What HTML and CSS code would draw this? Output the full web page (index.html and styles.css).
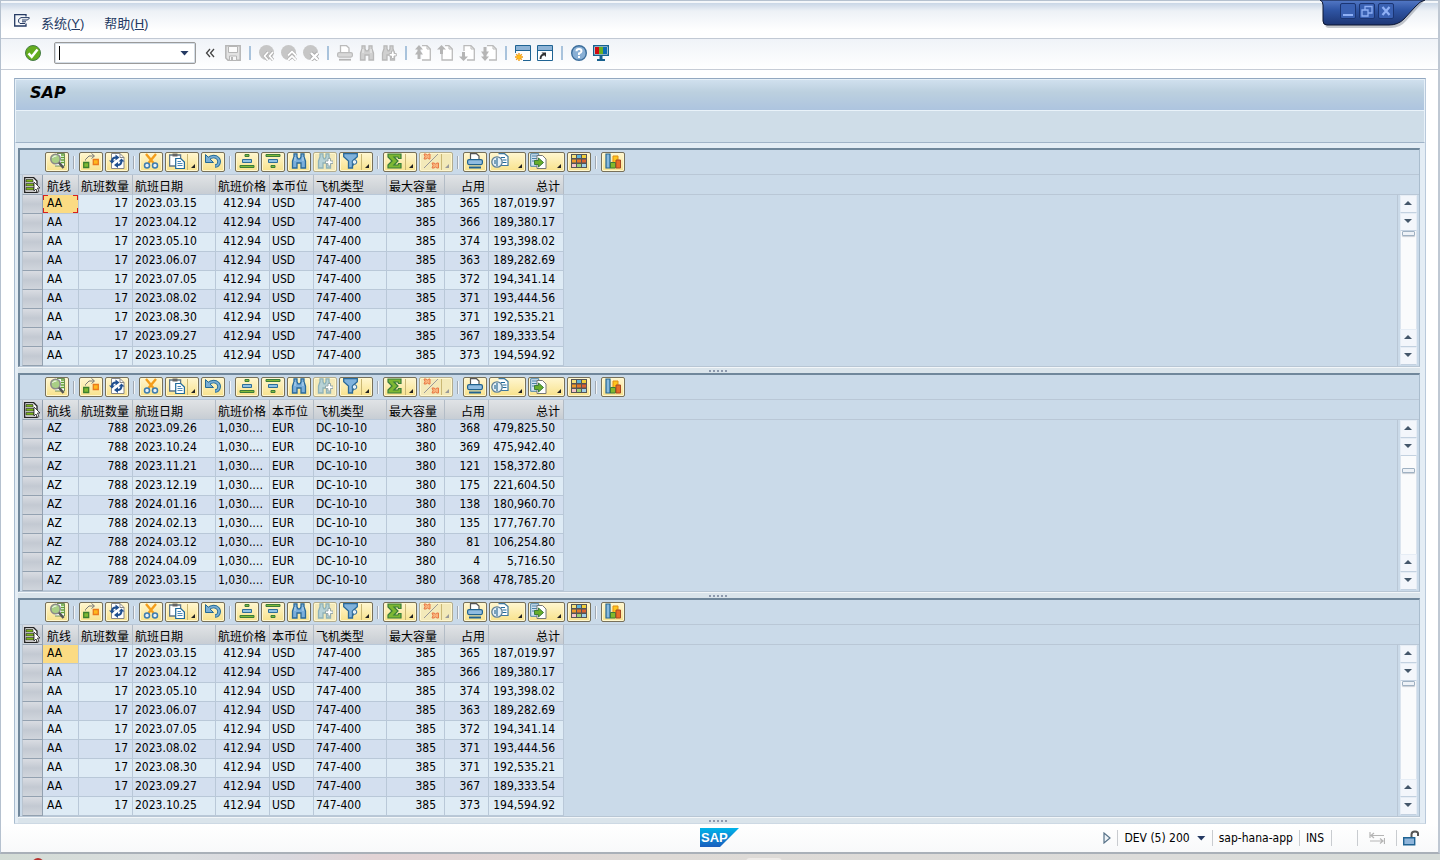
FILE: index.html
```html
<!DOCTYPE html>
<html lang="zh-CN">
<head>
  <meta charset="UTF-8" />
  <meta name="viewport" content="width=device-width, initial-scale=1.0"/>
  <title>SAP</title>
  <link rel="stylesheet" href="styles.css">
</head>
<body>
  <!-- icon sprite -->
  <svg class="sprite" aria-hidden="true">
    <symbol id="i-menu" viewBox="0 0 16 13"><path d="M12 2.500V.700H.7v11.300H12V9.500" fill="none" stroke="#253a63" stroke-width="1.300"/><path d="M15.500 3.600H7L4.600 5.500V8L6 9.500h5M8 6h5.500L15.500 4M8 7.800h4" fill="none" stroke="#253a63"/></symbol>
    <symbol id="i-ok" viewBox="0 0 16 16"><circle cx="8" cy="8" r="7.500" fill="#64ac1e" stroke="#467c46"/><path d="M3.500 8.300l3.200 3.500L12.500 4.500" fill="none" stroke="#fff" stroke-width="2.500"/></symbol>
    <symbol id="i-back" viewBox="0 0 10 10"><path d="M5 1L1.500 5 5 9M9 1L5.500 5 9 9" fill="none" stroke="#444" stroke-width="1.300"/></symbol>
    <symbol id="i-save" viewBox="0 0 16 16"><path d="M.8.800h14.400v14.400H3L.8 13z" fill="#e2e2e2" stroke="#b6b6b6" stroke-width="1.500"/><path d="M3.500 1.500h9v6h-9z" fill="#fbfbfb" stroke="#b6b6b6"/><path d="M4.500 11h7v4.500h-7z" fill="#f7f7f7" stroke="#b6b6b6"/><path d="M6 12h2v3H6z" fill="#b6b6b6"/></symbol>
    <symbol id="i-prev" viewBox="0 0 16 16"><circle cx="7.500" cy="7.500" r="7.500" fill="#c6c6c6"/><path d="M9 7L5.500 11 9 15M14 7l-3.500 4 3.500 4" fill="none" stroke="#aaa" stroke-width="3"/><path d="M9 7L5.500 11 9 15M14 7l-3.500 4 3.500 4" fill="none" stroke="#fff" stroke-width="1.800"/></symbol>
    <symbol id="i-exit" viewBox="0 0 16 16"><circle cx="7.500" cy="7.500" r="7.500" fill="#c6c6c6"/><path d="M7 10.500l4-4 4 4M7 15l4-4 4 4" fill="none" stroke="#aaa" stroke-width="3"/><path d="M7 10.500l4-4 4 4M7 15l4-4 4 4" fill="none" stroke="#fff" stroke-width="1.800"/></symbol>
    <symbol id="i-cancel" viewBox="0 0 16 16"><circle cx="7.500" cy="7.500" r="7.500" fill="#c6c6c6"/><path d="M8 8l7 7M15 8l-7 7" stroke="#aaa" stroke-width="4"/><path d="M8 8l7 7M15 8l-7 7" stroke="#fff" stroke-width="2.400"/></symbol>
    <symbol id="i-print-off" viewBox="0 0 16 16"><path d="M3.500 8V.7h6L12 3v5" fill="#fff" stroke="#bbb" stroke-width="1.300"/><rect x=".6" y="7.600" width="14.800" height="4.500" rx="1.500" fill="#d8d8d8" stroke="#bbb" stroke-width="1.200"/><path d="M2 14.700h12" stroke="#b4b4b4" stroke-width="1.800"/></symbol>
    <symbol id="i-find-off" viewBox="0 0 16 16"><path d="M3 .8h3v3l1 2h2l1-2v-3h3v3L14.500 8v7h-4.500v-5H6v5H1.500V8L3 3.800z" fill="#d0d0d0" stroke="#b8b8b8" stroke-width="1.300"/><path d="M4 4v4M12 4v4" stroke="#f0f0f0"/></symbol>
    <symbol id="i-next-off" viewBox="0 0 16 16"><path d="M3 .8h3v3l1 2h1l1-2v-3h3v3L13.500 8v7h-4v-5H6v5H1.500V8L3 3.800z" fill="#d0d0d0" stroke="#b8b8b8" stroke-width="1.300"/><path d="M10.500 6h2.500v2.500h2.300v2.500H13v2.500h-2.500V11H8.200V8.500h2.300z" fill="#fff" stroke="#b8b8b8"/></symbol>
    <symbol id="i-first" viewBox="0 0 16 16"><path d="M7 .7h5L15.300 4v11H7" fill="#fff" stroke="#bbb" stroke-width="1.300"/><path d="M12 1v3h3" fill="none" stroke="#bbb"/><path d="M4 0l4 4.500H5.500V6L8 9.500H5.500V14h-3V9.500H0L2.500 6V4.500H0z" fill="#b5b5b5"/></symbol>
    <symbol id="i-pgup" viewBox="0 0 16 16"><path d="M8 .7h4L15.300 4v11H5V9" fill="#fff" stroke="#bbb" stroke-width="1.300"/><path d="M12 1v3h3" fill="none" stroke="#bbb"/><path d="M4.500 0L9 4.500H6V9H3V4.500H0z" fill="#b5b5b5"/></symbol>
    <symbol id="i-pgdn" viewBox="0 0 16 16"><path d="M5 6V.7h7L15.300 4v11H8" fill="#fff" stroke="#bbb" stroke-width="1.300"/><path d="M12 1v3h3" fill="none" stroke="#bbb"/><path d="M3 7h3v4.500h3L4.500 16 0 11.500h3z" fill="#b5b5b5"/></symbol>
    <symbol id="i-last" viewBox="0 0 16 16"><path d="M6 .7h6L15.300 4v11H8" fill="#fff" stroke="#bbb" stroke-width="1.300"/><path d="M12 1v3h3" fill="none" stroke="#bbb"/><path d="M2.500 2h3v4.500H8L5.500 10v1.500H8L4 16l-4-4.500h2.500V10L0 6.500h2.500z" fill="#b5b5b5"/></symbol>
    <symbol id="i-session" viewBox="0 0 16 16"><path d="M.5.500h15v15H8M.5.500V8" fill="#fff" stroke="#1f6393"/><path d="M1 1h14v4H1z" fill="#8db3d6"/><path d="M0 5.500h16" stroke="#1f6393"/><path d="M4 8v8M0 12h8M1.200 9.200l5.600 5.600M6.800 9.200l-5.600 5.600" stroke="#f39b12" stroke-width="1.400"/><circle cx="4" cy="12" r="2" fill="#ffbd1a"/></symbol>
    <symbol id="i-shortcut" viewBox="0 0 16 16"><path d="M.5.500h15v15H.5z" fill="#fff" stroke="#1f6393"/><path d="M1 1h14v4H1z" fill="#8db3d6"/><path d="M0 5.500h16" stroke="#1f6393"/><path d="M3.500 14q0-4 3.500-4.500" fill="none" stroke="#333" stroke-width="1.800"/><path d="M4.500 7.500H9V12z" fill="#333"/></symbol>
    <symbol id="i-help" viewBox="0 0 16 16"><circle cx="8" cy="8" r="7.300" fill="#8ab0d5" stroke="#3c6e9c" stroke-width="1.400"/><path d="M5.500 6.300Q5.500 4 8 4t2.500 2.200Q10.500 7.500 8 8.500v1.500M8 11v2" fill="none" stroke="#fff" stroke-width="2"/></symbol>
    <symbol id="i-layout" viewBox="0 0 16 16"><path d="M.7.700h14.600v9.600H.7z" fill="#fff" stroke="#17618f" stroke-width="1.400"/><path d="M2 2h4v7H2z" fill="#d10a10"/><path d="M6 2h4v7H6z" fill="#6ab023"/><path d="M10 2h4v7h-4z" fill="#0e6eb4"/><path d="M6.500 11h3v3h2.500v2H4v-2h2.500z" fill="#17618f"/></symbol>

    <symbol id="g-detail" viewBox="0 0 16 16"><path d="M8 .5h7.500V13H6" fill="#fff" stroke="#6c8d55"/><path d="M12 2h3M12 4.500h3M12 7h3M12 9.500h3" stroke="#5fa22c" stroke-width="1.400"/><circle cx="6.500" cy="6" r="4.700" fill="#a9cf85" stroke="#8a8a8a" stroke-width="1.600"/><path d="M3.500 5q1-2.500 4-2" fill="none" stroke="#fff"/><path d="M10 9.500l4.500 5.500" stroke="#555" stroke-width="2.500"/></symbol>
    <symbol id="g-check" viewBox="0 0 16 16"><path d="M.7 9.500h5v5h-5z" fill="#7fb832" stroke="#3c7f2e" stroke-width="1.300"/><path d="M10.300 6.500h5v5h-5z" fill="#ffb91c" stroke="#ea7a1c" stroke-width="1.300"/><path d="M2.500 7.500V6.500L6 3h5M8.500.5l3 2.500-3 2.500" fill="none" stroke="#777"/></symbol>
    <symbol id="g-refresh" viewBox="0 0 16 16"><path d="M2.500.500H11l4 4v11H2.500z" fill="#fff" stroke="#888"/><path d="M11 .5v4h4" fill="none" stroke="#888"/><path d="M3 8.500q0-4 4-4M12.500 7.500q0 4.500-4 4.500" fill="none" stroke="#1f4f8f" stroke-width="2"/><path d="M6.500 1.500l4 3-4 3zM9 9l-4 3 4 3zM0 7.500h6l-3 3zM9.500 8.500h6l-3-3z" fill="#1f4f8f"/></symbol>
    <symbol id="g-cut" viewBox="0 0 16 16"><path d="M3 1l7.500 9M13 1L5.500 10" stroke="#f49d1a" stroke-width="2.400"/><circle cx="4" cy="12.500" r="2.500" fill="#e9f1f8" stroke="#3c7cae" stroke-width="1.500"/><circle cx="12" cy="12.500" r="2.500" fill="#e9f1f8" stroke="#3c7cae" stroke-width="1.500"/></symbol>
    <symbol id="g-paste" viewBox="0 0 16 16"><path d="M.6 2h11v11H.6z" fill="#fff" stroke="#5f7789" stroke-width="1.300"/><path d="M3.500.5h5v3h-5z" fill="#666"/><path d="M6.700 5.500h5L15.400 9v6.500H6.700z" fill="#fff" stroke="#1f6a9c" stroke-width="1.200"/><path d="M8.500 8.500H12M8.500 10.500h5M8.500 12.500h5" stroke="#4a88b6"/></symbol>
    <symbol id="g-undo" viewBox="0 0 16 16"><path d="M3 6q4-3.500 8-2 4.500 2.500 2.500 7-1 2-3.500 2" fill="none" stroke="#236a96" stroke-width="3.600"/><path d="M.5 1.500v8h8z" fill="#79aed4" stroke="#236a96"/><path d="M3 6q4-3.500 8-2 4.500 2.500 2.500 7-1 2-3 2" fill="none" stroke="#79aed4" stroke-width="1.800"/></symbol>
    <symbol id="g-asc" viewBox="0 0 16 16"><path d="M6 1.500h4v2H6z" fill="#82bb38" stroke="#3b7d3a"/><path d="M3.500 6.500h9v3h-9z" fill="#8ec1e4" stroke="#2c6d99"/><path d="M1 12.500h14v2H1z" fill="#82bb38" stroke="#3b7d3a"/></symbol>
    <symbol id="g-desc" viewBox="0 0 16 16"><path d="M1 1.500h14v2H1z" fill="#82bb38" stroke="#3b7d3a"/><path d="M3.500 6.500h9v3h-9z" fill="#8ec1e4" stroke="#2c6d99"/><path d="M6 12.500h4v2H6z" fill="#82bb38" stroke="#3b7d3a"/></symbol>
    <symbol id="g-find" viewBox="0 0 16 16"><path d="M3 .8h3v3l1 2h2l1-2v-3h3v3L14.500 8v7h-4.500v-5H6v5H1.500V8L3 3.800z" fill="#7aaedb" stroke="#2a6999" stroke-width="1.300"/><path d="M4 4v4M12 4v4" stroke="#b9d8ef"/></symbol>
    <symbol id="g-next" viewBox="0 0 16 16"><path d="M3 .8h3v3l1 2h1l1-2v-3h3v3L13.500 8v7h-4v-5H6v5H1.500V8L3 3.800z" fill="#b7d2d6" stroke="#8fb2b7" stroke-width="1.300"/><path d="M11 5.500h2.500V8H16v2.500h-2.500V13H11v-2.500H8.500V8H11z" fill="#fff" stroke="#9aa"/></symbol>
    <symbol id="g-filter" viewBox="0 0 16 16"><path d="M.7.700h13.600v3L9.500 8v7h-4V8L.7 3.700z" fill="#7fb2dc" stroke="#2a6999" stroke-width="1.300"/><circle cx="11.500" cy="9" r="2.300" fill="#e8f2f9" stroke="#2a6999"/><path d="M9 14l2-3" stroke="#2a6999"/></symbol>
    <symbol id="g-sum" viewBox="0 0 16 16"><path d="M1 1h13v4.500h-2.500L11 4H7l4 4-4 4h4l.5-1.500H14V15H1v-3l4-4-4-4z" fill="#7db733" stroke="#397c3a" stroke-width="1.200"/></symbol>
    <symbol id="g-sub" viewBox="0 0 16 16"><path d="M1 15L15 1" stroke="#999"/><path d="M1 1h2l1.500 1L6 1h1v5H6L4.500 5 3 6H1l1-2.500zM9 10h2l1.500 1 1.500-1h1.500v5H14l-1.500-1-1.500 1H9l1-2.500z" fill="#f8b37c" stroke="#e87945"/></symbol>
    <symbol id="g-print" viewBox="0 0 16 16"><path d="M3.500 8V.7h6L12 3v5" fill="#fff" stroke="#555" stroke-width="1.200"/><rect x=".6" y="6.600" width="14.800" height="5" rx="1.500" fill="#90bce1" stroke="#22638f" stroke-width="1.200"/><path d="M2 14.500h12" stroke="#22638f" stroke-width="2"/></symbol>
    <symbol id="g-view" viewBox="0 0 18 16"><path d="M7.500.700h6L17 3.500v9H8" fill="#fff" stroke="#3f789e" stroke-width="1.200"/><path d="M10 4.500h4M11.500 7h4M11.500 9.500h4" stroke="#1f6a9c"/><circle cx="6" cy="9" r="5.200" fill="#e6f0f7" stroke="#5d7f96" stroke-width="1.300"/><path d="M6 5v8M4 7v4" stroke="#3f789e" stroke-width="1.300"/></symbol>
    <symbol id="g-export" viewBox="0 0 18 16"><path d="M.7.700h8v12.600h-8z" fill="#d2e3f0" stroke="#4a82a9"/><path d="M2 3h5M2 5.500h5M2 8h3" stroke="#4a82a9"/><path d="M7 2.500h5.500L16 6v9.500H7z" fill="#fff" stroke="#777"/><path d="M4.500 7.500h4V5l5 4.500-5 4.500v-2.500h-4z" fill="#67ad2b" stroke="#3b7d3a"/></symbol>
    <symbol id="g-grid" viewBox="0 0 16 14"><path d="M0 0h16v14H0z" fill="#555"/><path d="M1 1h4v3H1z" fill="#f5e27a"/><path d="M6 1h4v3H6z" fill="#5fb2d8"/><path d="M11 1h4v3h-4z" fill="#f0cf39"/><path d="M1 5.500h4v3H1z" fill="#f29b2a"/><path d="M6 5.500h4v3H6z" fill="#e4762b"/><path d="M11 5.500h4v3h-4z" fill="#dc6132"/><path d="M1 10h4v3H1z" fill="#f4c4c8"/><path d="M6 10h4v3H6z" fill="#9ed173"/><path d="M11 10h4v3h-4z" fill="#a0cde8"/></symbol>
    <symbol id="g-chart" viewBox="0 0 16 16"><path d="M1 1h4v14H1z" fill="#86b8dd" stroke="#24658f" stroke-width="1.200"/><path d="M8 3h5v7H8z" fill="#ffc51d" stroke="#df8d10"/><path d="M5.500 9.500h5V15h-5z" fill="#82b82d" stroke="#3b7d3a"/><path d="M11 7h4.500v8H11z" fill="#e66b28" stroke="#a94820"/></symbol>
    <symbol id="g-select" viewBox="0 0 16 16"><path d="M.7.700h9L13 4v11.300H.7z" fill="#fff" stroke="#222" stroke-width="1.300"/><path d="M2 2.500h7V5H2zM2 6.500h8V9H2zM2 10.500h8V13H2z" fill="#7cb518" stroke="#333" stroke-width=".7"/><path d="M10 5v9l2-2 1.500 3.500 1.500-1L13.500 11H16z" fill="#fff" stroke="#222" stroke-width=".8"/></symbol>
    <symbol id="s-swap" viewBox="0 0 16 12"><path d="M1 0v6M2 3.500h13M5 1L2 3.500 5 6M15.500 6v6M1 9h13M11 6.500L14 9l-3 2.500" fill="none" stroke="#b5b5b5" stroke-width="1.200"/></symbol>
    <symbol id="s-lock" viewBox="0 0 16 16"><path d="M8.500 7V4.500Q8.500 1.500 12 1.500t3 3V6" fill="none" stroke="#555" stroke-width="2"/><path d="M.7 7.700h11v7H.7z" fill="#8fb5da" stroke="#1f6393" stroke-width="1.400"/></symbol>
  </svg>

  <div class="window">
    <nav class="menubar">
      <button class="menu-icon" aria-label="菜单"><svg width="16" height="13"><use href="#i-menu"/></svg></button>
      <a href="#">系统(<u>Y</u>)</a>
      <a href="#">帮助(<u>H</u>)</a>
    </nav>

    <div class="controls">
      <svg class="controls-shape" width="106" height="32" viewBox="0 0 106 32">
        <defs>
          <linearGradient id="tab" x1="0" y1="0" x2="0" y2="1"><stop offset="0" stop-color="#5479c6"/><stop offset=".4" stop-color="#2f55a4"/><stop offset="1" stop-color="#1d3674"/></linearGradient>
        </defs>
        <path d="M2 1Q5 3 5 8v16q0 4 4 4h62q9 0 15-7L104 1z" fill="#8a8f99" opacity=".5"/>
        <path d="M0 0q3 1 3 5v16q0 4 4 4h62q9 0 15-6L95 7q5-6 10-7z" fill="url(#tab)" stroke="#0c1633"/>
      </svg>
      <div class="controls-buttons">
        <button aria-label="最小化"><svg width="14" height="14" viewBox="0 0 14 14"><path d="M2 11h10" stroke="#8fb0f5" stroke-width="2"/></svg></button>
        <button aria-label="还原"><svg width="14" height="14" viewBox="0 0 14 14"><path d="M2 6h6v6H2zM5 6V2.500h7V9H8" fill="none" stroke="#8fb0f5" stroke-width="1.300"/></svg></button>
        <button aria-label="关闭"><svg width="14" height="14" viewBox="0 0 14 14"><path d="M3.500 3l7 8M10.500 3l-7 8" stroke="#8fb0f5" stroke-width="2.200"/></svg></button>
      </div>
    </div>

    <div class="toolbar">
      <button class="enter" aria-label="确认"><svg><use href="#i-ok"/></svg></button>
      <div class="command">
        <input type="text" aria-label="命令">
        <span class="cursor"></span>
        <button aria-label="历史"><span class="caret"></span></button>
      </div>
      <button class="collapse" aria-label="收起"><svg><use href="#i-back"/></svg></button>
      <button aria-label="保存"><svg><use href="#i-save"/></svg></button>
      <i></i>
      <button aria-label="返回"><svg><use href="#i-prev"/></svg></button>
      <button aria-label="退出"><svg><use href="#i-exit"/></svg></button>
      <button aria-label="取消"><svg><use href="#i-cancel"/></svg></button>
      <i></i>
      <button aria-label="打印"><svg><use href="#i-print-off"/></svg></button>
      <button aria-label="查找"><svg><use href="#i-find-off"/></svg></button>
      <button aria-label="查找下一个"><svg><use href="#i-next-off"/></svg></button>
      <i></i>
      <button aria-label="首页"><svg><use href="#i-first"/></svg></button>
      <button aria-label="上一页"><svg><use href="#i-pgup"/></svg></button>
      <button aria-label="下一页"><svg><use href="#i-pgdn"/></svg></button>
      <button aria-label="末页"><svg><use href="#i-last"/></svg></button>
      <i></i>
      <button aria-label="新建会话"><svg><use href="#i-session"/></svg></button>
      <button aria-label="快捷方式"><svg><use href="#i-shortcut"/></svg></button>
      <i></i>
      <button aria-label="帮助"><svg><use href="#i-help"/></svg></button>
      <button aria-label="布局"><svg><use href="#i-layout"/></svg></button>
    </div>

    <main class="screen">
      <h1>SAP</h1>
      <div class="app-toolbar"></div>
      <div class="grids" id="grids"></div>
    </main>

    <footer class="status">
      <svg class="logo" width="40" height="20" viewBox="0 0 40 20">
        <defs><linearGradient id="sap" x1="0" y1="0" x2="0" y2="1"><stop offset="0" stop-color="#00b4ea"/><stop offset="1" stop-color="#1a5dbd"/></linearGradient></defs>
        <path d="M0 0h39L20 19H0z" fill="url(#sap)"/>
        <text x="1" y="14" class="logo-text">SAP</text>
      </svg>
      <div class="status-fields">
        <button class="expand" aria-label="展开"><svg width="8" height="12" viewBox="0 0 8 12"><path d="M1 1v10l6-5z" fill="#eef3f7" stroke="#587389" stroke-width="1.200"/></svg></button>
        <button class="system">DEV (5) 200 <span class="caret"></span></button>
        <span class="field">sap-hana-app</span>
        <span class="field mode">INS</span>
        <span class="field blank"></span>
        <span class="field swap"><svg width="16" height="12"><use href="#s-swap"/></svg></span>
        <span class="field"><svg width="16" height="16"><use href="#s-lock"/></svg></span>
      </div>
    </footer>
  </div>
  <div class="taskbar"><span class="dot"></span><span class="pill"></span></div>

  <script src="script.js"></script>
</body>
</html>
```
FILE: styles.css
```css
* {
  box-sizing: border-box;
}

body {
  margin: 0;
  min-height: 100vh;
  display: flex;
  flex-direction: column;
  overflow-x: hidden;
  font-family: "DejaVu Sans Condensed", "Noto Sans CJK SC", sans-serif;
  font-size: 12px;
  color: #000;
  background: #fff;
}

button {
  margin: 0;
  padding: 0;
  border: none;
  background: none;
  font: inherit;
  color: inherit;
}

svg {
  display: block;
}

.sprite {
  position: absolute;
  width: 0;
  height: 0;
}

.window {
  position: relative;
  flex: 1;
  display: flex;
  flex-direction: column;
  border: 1px solid #b5c1cf;
  border-right: 2px solid #bfc8d3;
  border-bottom: 2px solid #a9b0b8;
  background: #fff;
}

.menubar {
  display: flex;
  align-items: center;
  height: 38px;
  padding: 6px 0 0 13px;
  border-top: 2px solid #f4f7fa;
  border-bottom: 1px solid #c2c9d4;
  background: linear-gradient(#c9d6e6, #edf1f6 8px, #fff 28px);
}

.menu-icon {
  margin-right: 11px;
  padding-bottom: 6px;
}

.menubar a {
  margin-right: 20px;
  font-family: "Liberation Sans", "Noto Sans CJK SC", sans-serif;
  font-size: 13px;
  line-height: 20px;
  color: #253a63;
  text-decoration: none;
}

/* window buttons */
.controls {
  position: absolute;
  top: -1px;
  right: 12px;
  width: 106px;
}

.controls-buttons {
  position: absolute;
  top: 3px;
  left: 20px;
  display: flex;
  gap: 3px;
}

.controls-buttons button {
  width: 16px;
  height: 16px;
  border: 1px solid #1b3573;
  border-radius: 2px;
  background: #3a61b3;
}

/* standard toolbar */
.toolbar {
  display: flex;
  align-items: center;
  gap: 6px;
  height: 31px;
  padding: 0 0 2px 24px;
  border-bottom: 1px solid #c6ccd6;
  background: linear-gradient(#f0f3f8, #fff);
}

.toolbar svg {
  width: 16px;
  height: 16px;
}

.toolbar i {
  width: 6px;
  height: 14px;
  background: linear-gradient(#a9c3dc, #a9c3dc) center / 2px 100% no-repeat;
}

.toolbar .enter {
  margin-right: 7px;
}

.toolbar .collapse {
  width: 17px;
  padding-left: 3px;
}

.toolbar .collapse svg {
  width: 10px;
  height: 10px;
}

.command {
  position: relative;
  display: flex;
  width: 142px;
  height: 22px;
  border: 1px solid #9a9a9a;
  border-radius: 2px;
  box-shadow: inset 0 0 0 1px #d4dde6;
  background: #fff;
}

.command input {
  flex: 1;
  min-width: 0;
  padding: 0 4px;
  border: none;
  outline: none;
  background: none;
  font: inherit;
}

.command .cursor {
  position: absolute;
  left: 4px;
  top: 3px;
  width: 1px;
  height: 14px;
  background: #000;
}

.command button {
  width: 20px;
  padding-left: 5px;
}

.caret {
  display: block;
  width: 9px;
  height: 5px;
  background: #253a63;
  clip-path: polygon(0 0, 100% 0, 50% 100%);
}

/* main screen */
.screen {
  margin: 8px 12px 0 13px;
  border: 1px solid;
  border-color: #93a8c0 #b9c9db #cdd9e4 #a9bccf;
  background: #e4edf5;
}

.screen h1 {
  margin: 0;
  height: 31px;
  padding-left: 14px;
  border: 1px solid #e6f0f8;
  border-bottom: none;
  font-family: "DejaVu Sans", sans-serif;
  font-size: 16px;
  font-style: italic;
  line-height: 25px;
  background: linear-gradient(#d0e0ee, #bcd0df 40%, #adc4df);
}

.app-toolbar {
  height: 33px;
  border: 1px solid #e9f2f9;
  border-bottom: 1px solid #a0b3c7;
  background: #cfdde8;
}

.grids {
  display: flex;
  flex-direction: column;
  padding: 5px 5px 0 3px;
}

/* ALV grid */
.alv {
  border: 2px solid #70879b;
  border-right: 1px solid #a9bccd;
  border-bottom: 1px solid #b8c6d4;
  background: #cadae9;
}

.splitter {
  display: flex;
  justify-content: center;
  gap: 2px;
  height: 6px;
  padding: 2px 2px 0 0;
  border-top: 1px solid #f2f6f9;
  background: #dae4eb;
}

.splitter span {
  width: 2px;
  height: 2px;
  background: #8d99ad;
}

.alv-toolbar {
  display: flex;
  align-items: center;
  gap: 2px;
  height: 25px;
  padding-left: 25px;
  border-bottom: 1px solid #b9c7d6;
}

.alv-toolbar i {
  width: 6px;
  height: 13px;
  background: linear-gradient(90deg, #a0a8b2 50%, #f2f5f8 50%) center / 2px 100% no-repeat;
}

.alv-toolbar button {
  position: relative;
  width: 24px;
  height: 20px;
  padding: 0 0 2px 3px;
  border: 1px solid #77705a;
  border-radius: 2px;
  background: linear-gradient(#fff6cf, #f8e28c);
  box-shadow: inset 0 0 0 1px #fff7cf;
}

.alv-toolbar svg {
  width: 16px;
  height: 16px;
}

.alv-toolbar .drop {
  width: 34px;
}

.alv-toolbar .wide {
  width: 37px;
  padding-left: 1px;
}

.alv-toolbar .wide svg {
  width: 18px;
}

/* small triangle of a menu button */
.alv-toolbar .drop::after,
.alv-toolbar .wide::after {
  content: "";
  position: absolute;
  right: 3px;
  bottom: 3px;
  width: 4px;
  height: 4px;
  background: #222;
  clip-path: polygon(100% 0, 100% 100%, 0 100%);
}

.alv-toolbar .drop::before {
  content: "";
  position: absolute;
  left: 21px;
  top: 1px;
  bottom: 1px;
  width: 1px;
  background: #c9b774;
}

.alv-toolbar .off {
  border-color: #b3ac8e;
  background: #f3e9b9;
}

.alv-toolbar .off::after {
  background: #999;
}

.alv-body {
  display: flex;
  justify-content: space-between;
}

.alv table {
  align-self: flex-start;
  flex: none;
  width: 542px;
  margin-left: 2px;
  table-layout: fixed;
  border-collapse: separate;
  border-spacing: 0;
}

.alv th,
.alv td {
  overflow: hidden;
  height: 19px;
  padding: 0 8px 2px 2px;
  border-right: 1px solid #b9c8d8;
  border-bottom: 1px solid #b9c8d8;
  line-height: 16px;
  text-align: left;
  white-space: nowrap;
}

.alv th {
  height: 20px;
  padding: 2px 3px 0 2px;
  border-right-color: #b3bcc6;
  font-family: "Noto Sans CJK SC", sans-serif;
  font-weight: normal;
  line-height: 17px;
  background: linear-gradient(#e0e3e6, #d2d6da 60%, #c7cdd4);
}

.alv .num {
  text-align: right;
}

.alv th.key,
.alv td.key {
  padding-left: 4px;
}

.alv td.count {
  padding-right: 4px;
}

.alv td {
  background: #deebf5;
}

.alv .alt td {
  background: #d3dfef;
}

.alv tr .sel.sel {
  padding: 0 0 0 1px;
  border-right: 1px solid #93a1b0;
  border-bottom: 1px solid #93a1b0;
  border-left: 1px solid #b9c4cf;
  background: linear-gradient(#d9dce2, #c3c9d2 50%, #d0d5dc);
}

.alv tr .current {
  background: #fbdb83;
}

/* red corners of the focused cell */
.alv tr .focused {
  background:
    linear-gradient(#d8201c, #d8201c) 0 0 / 5px 1px,
    linear-gradient(#d8201c, #d8201c) 0 0 / 1px 5px,
    linear-gradient(#d8201c, #d8201c) 100% 0 / 5px 1px,
    linear-gradient(#d8201c, #d8201c) 100% 0 / 1px 5px,
    linear-gradient(#d8201c, #d8201c) 0 100% / 5px 1px,
    linear-gradient(#d8201c, #d8201c) 0 100% / 1px 5px,
    linear-gradient(#d8201c, #d8201c) 100% 100% / 5px 1px,
    linear-gradient(#d8201c, #d8201c) 100% 100% / 1px 5px,
    #fbdb83;
  background-repeat: no-repeat;
}

.alv-rest {
  flex: 1;
  height: 20px;
  border-bottom: 1px solid #b9c7d6;
}

.scroll {
  display: flex;
  flex-direction: column;
  width: 22px;
  margin-top: 19px;
  padding: 0 2px 1px;
  border-left: 1px solid #b9c7d6;
  border-top: 1px solid #b9c7d6;
}

.scroll button {
  width: 17px;
  height: 18px;
  padding: 0 0 2px 3px;
  border: 1px solid #e6edf5;
  border-bottom-color: #c3d1e0;
  background: #f3f6fb;
}

.scroll .arrow {
  display: block;
  width: 8px;
  height: 4px;
  background: #44576a;
  clip-path: polygon(0 100%, 50% 0, 100% 100%);
}

.scroll .down {
  transform: rotate(180deg);
}

.track {
  flex: 1;
  width: 17px;
  padding: 0 1px;
  border: 1px solid #dbe4ee;
  border-width: 0 1px;
  background: #fafbfc;
}

.thumb {
  height: 5px;
  border: 1px solid #9fb1c2;
  border-radius: 1px;
  background: #eef2f7;
  box-shadow: 0 1px 1px #c8ced5;
}

/* status bar */
.status {
  position: relative;
  flex: 1;
  display: flex;
  align-items: center;
  justify-content: flex-end;
  min-height: 28px;
  padding-right: 19px;
  background: linear-gradient(#fff, #f8f9fa);
}

.logo {
  position: absolute;
  left: 699px;
  top: 4px;
}

.logo-text {
  font-family: "Liberation Sans", sans-serif;
  font-size: 13px;
  font-weight: bold;
  fill: #fff;
}

.status-fields {
  display: flex;
  align-items: center;
}

.status-fields .expand {
  margin-right: 6px;
}

.status-fields .system,
.status-fields .field {
  display: flex;
  align-items: center;
  height: 16px;
  padding: 0 6px;
  border-left: 1px solid #c9ccd0;
}

.status-fields .system {
  gap: 7px;
}

.status-fields .mode {
  padding-right: 7px;
}

.status-fields .blank {
  width: 26px;
}

.status-fields .swap {
  padding: 0 11px;
}

.status-fields .field:last-child {
  padding-right: 0;
}

.taskbar {
  position: relative;
  height: 7px;
  overflow: hidden;
  background: linear-gradient(90deg, #d3dcd5, #dbdee0 12%, #d9d8de 20%, #e2d3d5 26%, #dedad6 45%, #dcdcda 80%, #d6dcd9);
}

.taskbar .dot {
  position: absolute;
  left: 32px;
  top: 4px;
  width: 12px;
  height: 12px;
  border-radius: 50%;
  background: #b5302c;
}

.taskbar .pill {
  position: absolute;
  left: 746px;
  top: 4px;
  width: 36px;
  height: 10px;
  border-radius: 4px;
  background: #eeebe8;
}
```
FILE: script.js
```js
const columns = [
  { title: "航线", width: 36, cls: "key" },
  { title: "航班数量", width: 54, cls: "num count" },
  { title: "航班日期", width: 83 },
  { title: "航班价格", width: 54, cls: "num" },
  { title: "本币位", width: 44 },
  { title: "飞机类型", width: 73 },
  { title: "最大容量", width: 58, cls: "num", left: true },
  { title: "占用", width: 44, cls: "num" },
  { title: "总计", width: 75, cls: "num" }
];

const aaRows = [
  ["2023.03.15", "365", "187,019.97"],
  ["2023.04.12", "366", "189,380.17"],
  ["2023.05.10", "374", "193,398.02"],
  ["2023.06.07", "363", "189,282.69"],
  ["2023.07.05", "372", "194,341.14"],
  ["2023.08.02", "371", "193,444.56"],
  ["2023.08.30", "371", "192,535.21"],
  ["2023.09.27", "367", "189,333.54"],
  ["2023.10.25", "373", "194,594.92"]
].map(r => ["AA", "17", r[0], "412.94", "USD", "747-400", "385", r[1], r[2]]);

const azRows = [
  ["788", "2023.09.26", "368", "479,825.50"],
  ["788", "2023.10.24", "369", "475,942.40"],
  ["788", "2023.11.21", "121", "158,372.80"],
  ["788", "2023.12.19", "175", "221,604.50"],
  ["788", "2024.01.16", "138", "180,960.70"],
  ["788", "2024.02.13", "135", "177,767.70"],
  ["788", "2024.03.12", "81", "106,254.80"],
  ["788", "2024.04.09", "4", "5,716.50"],
  ["789", "2023.03.15", "368", "478,785.20"]
].map(r => ["AZ", r[0], r[1], "1,030.…", "EUR", "DC-10-10", "380", r[2], r[3]]);

const grids = [
  { rows: aaRows, current: "current focused", shift: 0, thumb: 0 },
  { rows: azRows, current: "", shift: 1, thumb: 12 },
  { rows: aaRows, current: "current", shift: 0, thumb: 0 }
];

// icon, label, extra class; null is a separator
const tools = [
  ["detail", "明细"], null,
  ["check", "检查"], ["refresh", "刷新"], null,
  ["cut", "剪切"], ["paste", "粘贴", "drop"], ["undo", "撤销"], null,
  ["asc", "升序"], ["desc", "降序"], ["find", "查找"], ["next", "查找下一个", "off"], ["filter", "过滤", "drop"], null,
  ["sum", "总计", "drop"], ["sub", "小计", "drop off"], null,
  ["print", "打印"], ["view", "视图", "wide"], ["export", "导出", "wide"], ["grid", "布局"], null,
  ["chart", "图形"]
];

function toolbar() {
  return tools.map(t => t
    ? `<button class="${t[2] || ""}" aria-label="${t[1]}"><svg><use href="#g-${t[0]}"/></svg></button>`
    : "<i></i>").join("");
}

function table(grid) {
  const cols = columns.map(c => `<col style="width:${c.width}px">`).join("");
  const head = columns.map(c => `<th class="${c.left ? "" : c.cls || ""}">${c.title}</th>`).join("");
  const body = grid.rows.map((row, i) => {
    const cells = row.map((value, j) => {
      const cls = (columns[j].cls || "") + (i === 0 && j === 0 ? " " + grid.current : "");
      return `<td class="${cls}">${value}</td>`;
    }).join("");
    return `<tr class="${(i + grid.shift) % 2 ? "alt" : ""}"><td class="sel"></td>${cells}</tr>`;
  }).join("");
  return `<table><colgroup><col style="width:21px">${cols}</colgroup>
    <thead><tr><th class="sel"><svg width="16" height="16"><use href="#g-select"/></svg></th>${head}</tr></thead>
    <tbody>${body}</tbody></table>`;
}

function scrollbar(thumb) {
  const up = '<button aria-label="向上"><span class="arrow"></span></button>';
  const down = '<button aria-label="向下"><span class="arrow down"></span></button>';
  return `<div class="scroll">${up}${down}
    <div class="track"><div class="thumb" style="margin-top:${thumb}px"></div></div>${up}${down}</div>`;
}

document.getElementById("grids").innerHTML = grids.map(g => `
  <section class="alv">
    <div class="alv-toolbar">${toolbar()}</div>
    <div class="alv-body">${table(g)}<div class="alv-rest"></div>${scrollbar(g.thumb)}</div>
  </section>
  <div class="splitter"><span></span><span></span><span></span><span></span><span></span></div>`).join("");
```
